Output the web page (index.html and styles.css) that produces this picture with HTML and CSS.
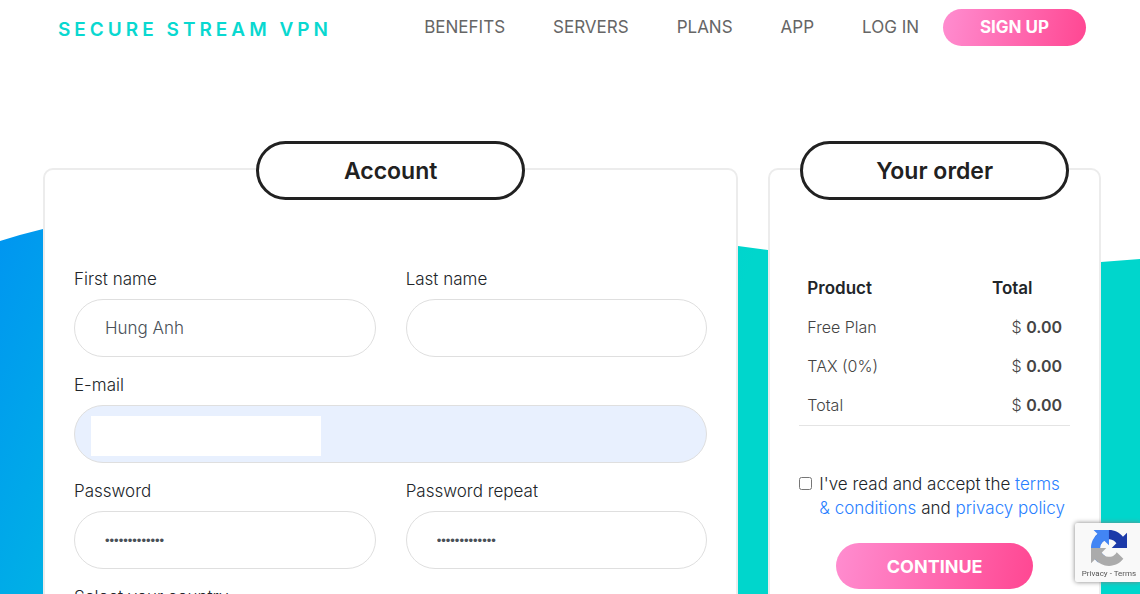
FILE: index.html
```html
<!DOCTYPE html>
<html lang="en">

<head>
    <meta charset="UTF-8">
    <meta name="viewport" content="width=device-width, initial-scale=1.0">
    <title>Secure Stream VPN</title>
    <link rel="stylesheet" href="styles.css">
</head>

<body>
    <div class="page">
        <svg class="wave" viewBox="0 0 1140 594" preserveAspectRatio="none" aria-hidden="true">
            <defs>
                <linearGradient id="waveColor" gradientUnits="userSpaceOnUse" x1="0" y1="240" x2="640" y2="520">
                    <stop offset="0" stop-color="#0096f0" />
                    <stop offset="0.25" stop-color="#00b0e6" />
                    <stop offset="1" stop-color="#00d6cc" />
                </linearGradient>
            </defs>
            <path fill="url(#waveColor)" d="M0 241 Q22 234 43 229 C300 165 510 212 738 246 L768 250 C880 267 980 273 1101 262 L1140 259 V594 H0 Z" />
        </svg>

        <header class="header">
            <a class="logo" href="#">SECURE STREAM VPN</a>
            <nav class="menu">
                <a href="#">BENEFITS</a>
                <a href="#">SERVERS</a>
                <a href="#">PLANS</a>
                <a href="#">APP</a>
                <a href="#">LOG IN</a>
            </nav>
            <a class="btn btn-signup" href="#">SIGN UP</a>
        </header>

        <form class="checkout">
            <section class="card card-account">
                <h2 class="card-title">Account</h2>
                <div class="fields">
                    <div class="field">
                        <label for="firstName">First name</label>
                        <input type="text" id="firstName" value="Hung Anh">
                    </div>
                    <div class="field">
                        <label for="lastName">Last name</label>
                        <input type="text" id="lastName">
                    </div>
                    <div class="field field-full">
                        <label for="email">E-mail</label>
                        <input class="autofilled" type="email" id="email">
                    </div>
                    <div class="field">
                        <label for="password">Password</label>
                        <input type="password" id="password" value="abcdefghijklm">
                    </div>
                    <div class="field">
                        <label for="passwordRepeat">Password repeat</label>
                        <input type="password" id="passwordRepeat" value="abcdefghijklm">
                    </div>
                    <div class="field field-full">
                        <label for="country">Select your country</label>
                        <select id="country">
                            <option></option>
                        </select>
                    </div>
                </div>
            </section>

            <section class="card card-order">
                <h2 class="card-title">Your order</h2>
                <table class="order">
                    <thead>
                        <tr>
                            <th>Product</th>
                            <th class="total">Total</th>
                        </tr>
                    </thead>
                    <tbody>
                        <tr>
                            <td>Free Plan</td>
                            <td class="price">$ <b>0.00</b></td>
                        </tr>
                        <tr>
                            <td>TAX (0%)</td>
                            <td class="price">$ <b>0.00</b></td>
                        </tr>
                        <tr>
                            <td>Total</td>
                            <td class="price">$ <b>0.00</b></td>
                        </tr>
                    </tbody>
                </table>
                <div class="accept">
                    <input type="checkbox" id="accept">
                    <label for="accept">I've read and accept the <a href="#">terms &amp;&nbsp;conditions</a> and <a href="#">privacy policy</a></label>
                </div>
                <button class="btn btn-continue" type="submit">CONTINUE</button>
            </section>
        </form>

        <aside class="captcha">
            <svg viewBox="0 0 64 64" width="36" height="36" aria-hidden="true">
                <path fill="#1c3aa9" d="M64 31.955l-.013-1.367V4.687l-7.16 7.16C50.967 4.674 42.033.093 32.03.093c-10.41 0-19.658 4.964-25.504 12.65l11.736 11.86a15.55 15.55 0 0 1 4.754-5.334c2.05-1.6 4.952-2.906 9.015-2.906.49 0 .87.057 1.148.165 5.034.397 9.397 3.175 11.966 7.207l-8.307 8.307L64 31.955" />
                <path fill="#4285f4" d="M31.862.094l-1.367.013H4.594l7.16 7.16C4.58 13.127 0 22.06 0 32.065c0 10.41 4.964 19.658 12.65 25.504L24.51 45.833a15.55 15.55 0 0 1-5.334-4.754c-1.6-2.05-2.906-4.952-2.906-9.015 0-.49.057-.87.165-1.148.397-5.034 3.175-9.397 7.207-11.966l8.307 8.307L31.862.094" />
                <path fill="#ababab" d="M.001 32.045l.013 1.367v25.9l7.16-7.16c5.86 7.173 14.792 11.754 24.796 11.754 10.41 0 19.658-4.964 25.504-12.65L45.738 39.397a15.55 15.55 0 0 1-4.754 5.334c-2.05 1.6-4.952 2.906-9.015 2.906-.49 0-.87-.057-1.148-.165-5.034-.397-9.397-3.175-11.966-7.207l8.307-8.307-27.16.087" />
            </svg>
            <div class="captcha-links"><a href="#">Privacy</a> - <a href="#">Terms</a></div>
        </aside>
    </div>
</body>

</html>
```
FILE: styles.css
```css
* {
    box-sizing: border-box;
}

body {
    margin: 0;
    font-family: Inter, "Open Sans", sans-serif;
    font-size: 17px;
    font-weight: 300;
    line-height: 24px;
    color: #212529;
    background: #fff;
}

a {
    color: #2a7fff;
    text-decoration: none;
}

.page {
    position: relative;
    height: 100vh;
    overflow: hidden;
}

/* coloured wave behind the cards */
.wave {
    position: absolute;
    top: 0;
    left: 0;
    z-index: -1;
    width: 100%;
    height: 100%;
}

.header {
    display: flex;
    align-items: center;
    padding: 9px 54px 0 58px;
}

.logo {
    margin-right: auto;
    padding-top: 4px;
    font-size: 19px;
    font-weight: 600;
    letter-spacing: 4px;
    color: #09d8d0;
}

.menu {
    display: flex;
    gap: 48px;
    margin-right: 24px;
    padding-bottom: 2px;
}

.menu a {
    font-weight: 400;
    color: #666;
}

.btn {
    border: 0;
    border-radius: 30px;
    font-family: inherit;
    font-weight: 700;
    text-align: center;
    color: #fff;
    background: linear-gradient(100deg, #ff8dd0, #ff4792);
}

.btn-signup {
    width: 143px;
    height: 37px;
    line-height: 36px;
}

.checkout {
    display: grid;
    grid-template-columns: repeat(12, 1fr);
    gap: 30px;
    padding: 122px 39px 0 43px;
}

.card {
    border: 2px solid #ececec;
    border-radius: 10px;
    padding: 0 29px 30px;
    background: #fff;
}

.card-account {
    grid-column: span 8;
}

.card-order {
    grid-column: span 4;
}

.card-title {
    width: 269px;
    max-width: 100%;
    margin: -29px auto 67px;
    border: 3px solid #212121;
    border-radius: 30px;
    padding-top: 1px;
    font-size: 23px;
    font-weight: 600;
    line-height: 52px;
    text-align: center;
    color: #212121;
    background: #fff;
}

.fields {
    display: grid;
    grid-template-columns: 1fr 1fr;
    gap: 16px 30px;
}

.field-full {
    grid-column: span 2;
}

.field label {
    display: block;
    margin-bottom: 8px;
}

.field input,
.field select {
    display: block;
    width: 100%;
    height: 58px;
    padding: 0 30px;
    border: 1px solid #dfdfdf;
    border-radius: 30px;
    font-family: inherit;
    font-size: 17px;
    font-weight: 300;
    color: #495057;
    background: #fff;
}

.field input[type="password"] {
    font-family: "Liberation Sans", sans-serif;
    font-size: 13px;
}

.field .autofilled {
    background: linear-gradient(#fff, #fff) 16px 10px / 230px 40px no-repeat #e8f0fe;
}

.order {
    width: 100%;
    border-collapse: collapse;
    border-bottom: 1px solid #e4e4e4;
    font-size: 16px;
    line-height: 23px;
    color: #444;
}

.order th,
.order td {
    padding: 8px;
    text-align: left;
}

.order th {
    padding-top: 10px;
    font-size: 17px;
    font-weight: 600;
    color: #212529;
}

.order .total {
    width: 86px;
}

.order .price {
    text-align: right;
}

.order b {
    font-weight: 600;
}

.accept {
    display: flex;
    align-items: flex-start;
    gap: 7px;
    margin: 46px 0 23px;
}

.accept input {
    flex: none;
    width: 13px;
    height: 13px;
    margin: 5px 0 0;
}

.btn-continue {
    display: block;
    width: 197px;
    height: 46px;
    margin: 0 auto;
    font-size: 18px;
}

.captcha {
    position: fixed;
    right: 0;
    bottom: 12px;
    width: 65px;
    height: 59px;
    padding: 7px 0 0 3px;
    border-radius: 2px 0 0 2px;
    text-align: center;
    background: #f9f9f9;
    box-shadow: 0 0 5px #808080;
}

.captcha svg {
    display: block;
    margin: 0 auto;
}

.captcha-links {
    font-family: Roboto, sans-serif;
    font-size: 8px;
    font-weight: 400;
    line-height: 16px;
    color: #555;
}

.captcha-links a {
    color: #555;
}
```
